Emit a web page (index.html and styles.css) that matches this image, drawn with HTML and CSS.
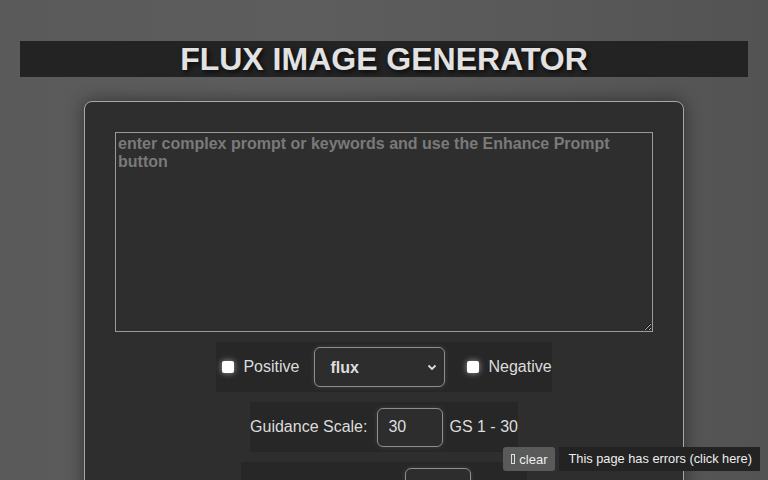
FILE: index.html
```html
<!DOCTYPE html>
<html lang="en">
<head>
<meta charset="utf-8">
<title>Flux Image Generator</title>
<link rel="stylesheet" href="styles.css">
</head>
<body>
  <h1 class="title">FLUX IMAGE GENERATOR</h1>
  <main class="panel">
    <textarea class="prompt" placeholder="enter complex prompt or keywords and use the Enhance Prompt button"></textarea>
    <div class="rows">
      <div class="band band-model">
        <label class="check"><input type="checkbox" class="box"><span>Positive</span></label>
        <div class="select-wrap">
          <select class="model">
            <option>flux</option>
          </select>
          <svg class="chev" width="10" height="7" viewBox="0 0 10 7"><path d="M1.5 1.5 L5 5 L8.5 1.5" fill="none" stroke="#ddd" stroke-width="1.8"/></svg>
        </div>
        <label class="check check-neg"><input type="checkbox" class="box"><span>Negative</span></label>
      </div>
      <div class="band band-gs">
        <span class="lbl">Guidance Scale:</span>
        <input class="num" type="text" value="30">
        <span class="hint">GS 1 - 30</span>
      </div>
      <div class="band band-steps">
        <span class="lbl low">Num Inference Steps:</span>
        <input class="num" type="text" value="28">
        <span class="hint low">1 - 100</span>
      </div>
    </div>
  </main>
  <div class="errbar">
    <button class="clear"><span class="tofu"></span>clear</button>
    <div class="errmsg">This page has errors (click here)</div>
  </div>
</body>
</html>
```

FILE: styles.css
```css
html, body {
  height: 100%;
}
body {
  margin: 0;
  padding: 0 20px;
  background: linear-gradient(to right, #5a5a5a 0%, #5d5d5d 40%, #585858 75%, #535353 100%);
  font-family: "Liberation Sans", Arial, sans-serif;
  color: #dddddd;
  overflow: hidden;
}
.title {
  margin: 41px 0 24px;
  height: 36px;
  line-height: 36px;
  background: #232323;
  color: #e2e2e2;
  font-size: 32px;
  font-weight: bold;
  text-align: center;
  text-shadow: 2px 2px 5px rgba(0, 0, 0, 0.8);
}
.panel {
  box-sizing: border-box;
  width: 600px;
  margin: 0 auto;
  padding: 30px 30px 40px;
  background: #2e2e2e;
  border: 1px solid #a8a8a8;
  border-radius: 8px;
  box-shadow: 0 0 18px rgba(0, 0, 0, 0.45);
  min-height: 500px;
}
.prompt {
  display: block;
  box-sizing: border-box;
  width: 538px;
  height: 200px;
  margin: 0 0 10px;
  padding: 2px;
  background: #2e2e2e;
  border: 1px solid #9a9a9a;
  color: #dddddd;
  font-family: "Liberation Sans", Arial, sans-serif;
  font-size: 16px;
  font-weight: bold;
  line-height: 18px;
  resize: vertical;
  outline: none;
}
.prompt::placeholder {
  color: #7a7a7a;
}
.rows {
  display: flex;
  flex-direction: column;
  align-items: center;
  gap: 10px;
}
.band {
  display: flex;
  align-items: center;
  height: 50px;
  background: #272727;
  font-size: 16px;
  color: #dcdcdc;
}
.check {
  display: flex;
  align-items: center;
  gap: 9px;
}
.band-model .check:first-child {
  padding-left: 6px;
}
.box {
  appearance: none;
  -webkit-appearance: none;
  width: 12px;
  height: 12px;
  margin: 0;
  background: #ffffff;
  border-radius: 2px;
  box-shadow: 0 0 6px rgba(255, 255, 255, 0.55);
}
.select-wrap {
  position: relative;
  margin: 0 22px 0 15px;
}
.model {
  appearance: none;
  -webkit-appearance: none;
  display: block;
  width: 131px;
  height: 40px;
  padding: 0 0 0 15px;
  background: #2d2d2d;
  border: 1px solid #8e8e8e;
  border-radius: 6px;
  color: #dddddd;
  font-family: "Liberation Sans", Arial, sans-serif;
  font-size: 16px;
  font-weight: bold;
  box-shadow: 0 0 5px rgba(255, 255, 255, 0.12);
}
.chev {
  position: absolute;
  right: 8px;
  top: 17px;
}
.lbl {
  margin-right: 10px;
}
.low {
  padding-top: 14px;
}
.num {
  box-sizing: border-box;
  width: 66px;
  height: 39px;
  margin: 0 6px 0 0;
  padding: 0 10px;
  background: #2d2d2d;
  border: 1px solid #8e8e8e;
  border-radius: 6px;
  color: #dddddd;
  font-family: "Liberation Sans", Arial, sans-serif;
  font-size: 16px;
  box-shadow: 0 0 5px rgba(255, 255, 255, 0.12);
  outline: none;
}
.errbar {
  position: fixed;
  right: 8px;
  bottom: 9px;
  display: flex;
  gap: 4px;
  font-family: "Liberation Sans", Arial, sans-serif;
  font-size: 13px;
}
.clear {
  display: flex;
  align-items: center;
  gap: 4px;
  height: 24px;
  padding: 0 7px 0 8px;
  background: #5a5a5a;
  border: none;
  border-radius: 3px;
  color: #eeeeee;
  font-family: inherit;
  font-size: 13px;
}
.tofu {
  box-sizing: border-box;
  width: 4px;
  height: 10px;
  border: 1px solid #dddddd;
}
.errmsg {
  height: 24px;
  line-height: 24px;
  padding: 0 8px 0 10px;
  background: #232323;
  color: #eeeeee;
  font-size: 12.8px;
}
```
